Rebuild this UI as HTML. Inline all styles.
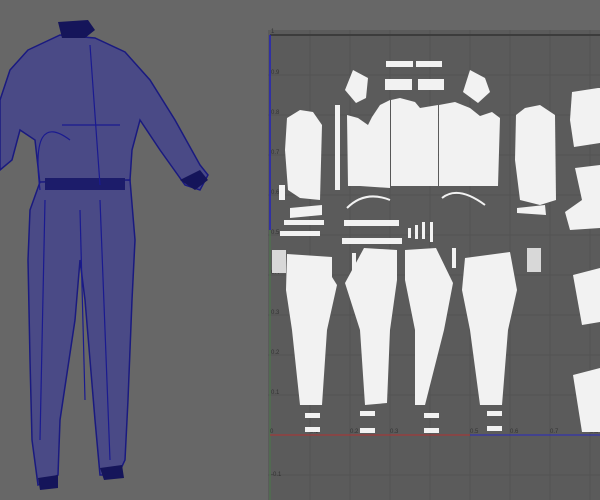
<!DOCTYPE html>
<html><head><style>
html,body{margin:0;padding:0;background:#676767;width:600px;height:500px;overflow:hidden}
svg{display:block}
text{font-family:"Liberation Sans",sans-serif;font-size:6px;fill:#333}
</style></head><body>
<svg width="600" height="500" viewBox="0 0 600 500" xmlns="http://www.w3.org/2000/svg">
<rect width="600" height="500" fill="#676767"/>
<rect x="268" y="30" width="332" height="470" fill="#5b5b5b"/>
<g stroke="#535353" stroke-width="1">
<path d="M310 30V500M350 30V500M390 30V500M430 30V500M470 30V500M510 30V500M550 30V500M590 30V500"/>
<path d="M268 75H600M268 115H600M268 155H600M268 195H600M268 235H600M268 275H600M268 315H600M268 355H600M268 395H600M268 475H600"/>
</g>
<path d="M270 35H600" stroke="#333" stroke-width="1.5"/>
<path d="M270 35V230" stroke="#2222bb" stroke-width="1.5"/>
<path d="M270 230V500" stroke="#4a7a4a" stroke-width="1"/>
<path d="M270 435H470" stroke="#b03030" stroke-width="1"/>
<path d="M470 435H600" stroke="#2828c0" stroke-width="1"/>
<text x="271" y="74">0.9</text><text x="271" y="114">0.8</text><text x="271" y="154">0.7</text>
<text x="271" y="194">0.6</text><text x="271" y="234">0.5</text><text x="271" y="274">0.4</text>
<text x="271" y="314">0.3</text><text x="271" y="354">0.2</text><text x="271" y="394">0.1</text>
<text x="271" y="476">-0.1</text><text x="271" y="33">1</text>
<text x="270" y="433">0</text><text x="310" y="433">0.1</text><text x="350" y="433">0.2</text><text x="390" y="433">0.3</text>
<text x="470" y="433">0.5</text><text x="510" y="433">0.6</text><text x="550" y="433">0.7</text><text x="590" y="433">0.8</text>
<g fill="#f2f2f2">
<polygon points="353,70 368,78 366,98 356,103 345,90"/>
<rect x="386" y="61" width="27" height="6"/><rect x="416" y="61" width="26" height="6"/>
<rect x="385" y="79" width="27" height="11"/><rect x="418" y="79" width="26" height="11"/>
<polygon points="470,70 485,78 490,92 478,103 463,92"/>
<polygon points="287,118 300,110 313,112 322,125 320,200 300,198 288,190 285,150"/>
<rect x="279" y="185" width="6" height="15"/>
<polygon points="290,208 322,205 322,215 290,218"/>
<rect x="335" y="105" width="5" height="85"/>
<polygon points="347,115 358,118 368,125 372,117 380,105 390,100 390,188 360,186 348,186"/>
<polygon points="391,100 400,98 415,102 420,108 438,105 438,186 425,186 391,186"/>
<polygon points="439,105 455,102 470,108 480,116 492,112 500,118 498,186 439,186"/>
<polygon points="516,115 525,108 540,105 555,115 556,200 540,205 520,200 515,160"/>
<polygon points="517,208 545,205 546,215 517,213"/>
<rect x="284" y="220" width="40" height="5"/><rect x="280" y="231" width="40" height="5"/>
<rect x="344" y="220" width="55" height="6"/><rect x="342" y="238" width="60" height="6"/>
<path d="M347 208 Q365 190 390 200" stroke="#f2f2f2" stroke-width="2" fill="none"/>
<path d="M442 198 Q458 185 485 205" stroke="#f2f2f2" stroke-width="2" fill="none"/>
<rect x="408" y="228" width="3" height="10"/><rect x="415" y="225" width="3" height="14"/><rect x="422" y="222" width="3" height="17"/><rect x="430" y="222" width="3" height="20"/>
<rect x="272" y="250" width="14" height="23" fill="#d8d8d8"/><rect x="527" y="248" width="14" height="24" fill="#d8d8d8"/>
<polygon points="287,254 332,257 332,277 337,285 327,330 322,405 300,405 292,330 286,290"/>
<polygon points="345,283 364,248 397,250 397,280 390,330 387,403 365,405 360,330"/>
<polygon points="405,250 436,248 453,283 444,330 425,405 415,405 415,330 405,280"/>
<polygon points="465,258 510,252 517,290 508,330 502,405 480,405 470,330 462,290"/>
<rect x="352" y="253" width="4" height="20"/><rect x="452" y="248" width="4" height="20"/>
<rect x="305" y="413" width="15" height="5"/><rect x="305" y="427" width="15" height="5"/>
<rect x="360" y="411" width="15" height="5"/><rect x="360" y="428" width="15" height="5"/>
<rect x="424" y="413" width="15" height="5"/><rect x="424" y="428" width="15" height="5"/>
<rect x="487" y="411" width="15" height="5"/><rect x="487" y="426" width="15" height="5"/>
<polygon points="572,92 598,88 600,88 600,143 574,147 570,120"/>
<polygon points="575,168 600,165 600,228 570,230 565,212 582,200"/>
<polygon points="573,275 600,268 600,322 582,325"/>
<polygon points="573,375 600,368 600,432 582,432"/>
</g>
<g fill="#4a4a86" stroke="#1a1a80" stroke-width="1.5">
<polygon points="28,50 60,35 95,38 125,52 150,80 175,120 200,165 208,175 200,190 185,185 160,150 140,120 132,150 130,180 40,185 35,140 20,130 12,160 0,170 0,100 10,70"/>
<polygon points="40,182 130,180 135,240 132,300 128,400 125,460 118,475 100,475 95,420 85,300 80,260 75,320 60,420 58,475 38,485 32,440 30,360 28,260 30,210"/>
</g>
<polygon points="58,22 88,20 95,30 85,38 62,38" fill="#15155a"/>
<rect x="45" y="178" width="80" height="12" fill="#1c1c6a"/>
<polygon points="180,180 200,170 208,180 195,190" fill="#15155a"/>
<polygon points="38,478 58,475 58,488 40,490" fill="#15155a"/>
<polygon points="100,468 122,465 124,478 104,480" fill="#15155a"/>
<path d="M90 45 L100 185 M62 125 L120 125 M80 210 L85 400 M70 140 Q30 110 40 190 M100 200 L110 460 M45 200 L40 440" stroke="#1a1a90" stroke-width="1.2" fill="none"/>
</svg>
</body></html>
